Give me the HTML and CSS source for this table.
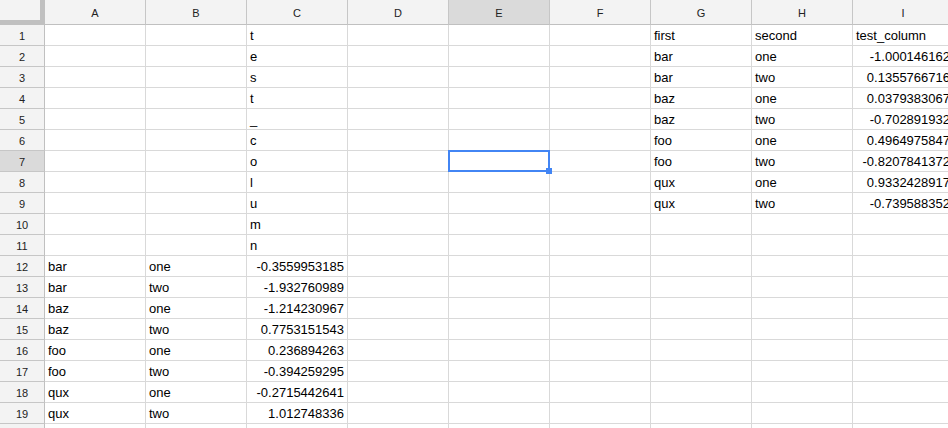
FILE: index.html
```html
<!DOCTYPE html>
<html>
<head>
<meta charset="utf-8">
<link rel="stylesheet" href="styles.css">
</head>
<body>
<div class="sheet">
  <div class="corner"></div>
  <div class="ch">A</div><div class="ch">B</div><div class="ch">C</div><div class="ch">D</div><div class="ch on">E</div><div class="ch">F</div><div class="ch">G</div><div class="ch">H</div><div class="ch">I</div>

  <div class="rh">1</div><div class="c"></div><div class="c"></div><div class="c">t</div><div class="c"></div><div class="c"></div><div class="c"></div><div class="c">first</div><div class="c">second</div><div class="c">test_column</div>
  <div class="rh">2</div><div class="c"></div><div class="c"></div><div class="c">e</div><div class="c"></div><div class="c"></div><div class="c"></div><div class="c">bar</div><div class="c">one</div><div class="c n">-1.000146162</div>
  <div class="rh">3</div><div class="c"></div><div class="c"></div><div class="c">s</div><div class="c"></div><div class="c"></div><div class="c"></div><div class="c">bar</div><div class="c">two</div><div class="c n">0.1355766716</div>
  <div class="rh">4</div><div class="c"></div><div class="c"></div><div class="c">t</div><div class="c"></div><div class="c"></div><div class="c"></div><div class="c">baz</div><div class="c">one</div><div class="c n">0.0379383067</div>
  <div class="rh">5</div><div class="c"></div><div class="c"></div><div class="c">_</div><div class="c"></div><div class="c"></div><div class="c"></div><div class="c">baz</div><div class="c">two</div><div class="c n">-0.702891932</div>
  <div class="rh">6</div><div class="c"></div><div class="c"></div><div class="c">c</div><div class="c"></div><div class="c"></div><div class="c"></div><div class="c">foo</div><div class="c">one</div><div class="c n">0.4964975847</div>
  <div class="rh on">7</div><div class="c"></div><div class="c"></div><div class="c">o</div><div class="c"></div><div class="c cur"><span class="sel"></span><span class="handle"></span></div><div class="c"></div><div class="c">foo</div><div class="c">two</div><div class="c n">-0.8207841372</div>
  <div class="rh">8</div><div class="c"></div><div class="c"></div><div class="c">l</div><div class="c"></div><div class="c"></div><div class="c"></div><div class="c">qux</div><div class="c">one</div><div class="c n">0.9332428917</div>
  <div class="rh">9</div><div class="c"></div><div class="c"></div><div class="c">u</div><div class="c"></div><div class="c"></div><div class="c"></div><div class="c">qux</div><div class="c">two</div><div class="c n">-0.739588352</div>
  <div class="rh">10</div><div class="c"></div><div class="c"></div><div class="c">m</div><div class="c"></div><div class="c"></div><div class="c"></div><div class="c"></div><div class="c"></div><div class="c"></div>
  <div class="rh">11</div><div class="c"></div><div class="c"></div><div class="c">n</div><div class="c"></div><div class="c"></div><div class="c"></div><div class="c"></div><div class="c"></div><div class="c"></div>
  <div class="rh">12</div><div class="c">bar</div><div class="c">one</div><div class="c n">-0.3559953185</div><div class="c"></div><div class="c"></div><div class="c"></div><div class="c"></div><div class="c"></div><div class="c"></div>
  <div class="rh">13</div><div class="c">bar</div><div class="c">two</div><div class="c n">-1.932760989</div><div class="c"></div><div class="c"></div><div class="c"></div><div class="c"></div><div class="c"></div><div class="c"></div>
  <div class="rh">14</div><div class="c">baz</div><div class="c">one</div><div class="c n">-1.214230967</div><div class="c"></div><div class="c"></div><div class="c"></div><div class="c"></div><div class="c"></div><div class="c"></div>
  <div class="rh">15</div><div class="c">baz</div><div class="c">two</div><div class="c n">0.7753151543</div><div class="c"></div><div class="c"></div><div class="c"></div><div class="c"></div><div class="c"></div><div class="c"></div>
  <div class="rh">16</div><div class="c">foo</div><div class="c">one</div><div class="c n">0.236894263</div><div class="c"></div><div class="c"></div><div class="c"></div><div class="c"></div><div class="c"></div><div class="c"></div>
  <div class="rh">17</div><div class="c">foo</div><div class="c">two</div><div class="c n">-0.394259295</div><div class="c"></div><div class="c"></div><div class="c"></div><div class="c"></div><div class="c"></div><div class="c"></div>
  <div class="rh">18</div><div class="c">qux</div><div class="c">one</div><div class="c n">-0.2715442641</div><div class="c"></div><div class="c"></div><div class="c"></div><div class="c"></div><div class="c"></div><div class="c"></div>
  <div class="rh">19</div><div class="c">qux</div><div class="c">two</div><div class="c n">1.012748336</div><div class="c"></div><div class="c"></div><div class="c"></div><div class="c"></div><div class="c"></div><div class="c"></div>
  <div class="rh">20</div><div class="c"></div><div class="c"></div><div class="c"></div><div class="c"></div><div class="c"></div><div class="c"></div><div class="c"></div><div class="c"></div><div class="c"></div>
</div>
</body>
</html>
```

FILE: styles.css
```css
html, body {
  margin: 0;
  padding: 0;
  background: #ffffff;
  overflow: hidden;
  width: 948px;
  height: 428px;
}

.sheet {
  display: grid;
  grid-template-columns: 45px repeat(9, 101px);
  grid-template-rows: 25px repeat(20, 21px);
  width: 954px;
  font-family: "Liberation Sans", Arial, sans-serif;
}

.corner {
  background: #f3f3f3;
  box-sizing: border-box;
  border-right: 5px solid #c0c0c0;
  border-bottom: 5px solid #c0c0c0;
}

.ch {
  background: #f3f3f3;
  box-sizing: border-box;
  border-right: 1px solid #c6c6c6;
  border-bottom: 1px solid #c0c0c0;
  font-size: 11px;
  color: #222222;
  display: flex;
  align-items: center;
  justify-content: center;
  padding-top: 2px;
}

.rh {
  background: #f3f3f3;
  box-sizing: border-box;
  border-right: 1px solid #c0c0c0;
  border-bottom: 1px solid #c6c6c6;
  font-size: 11px;
  color: #222222;
  display: flex;
  align-items: center;
  justify-content: center;
  padding-top: 1px;
}

.on {
  background: #dadada;
}

.c {
  box-sizing: border-box;
  border-right: 1px solid #d9d9d9;
  border-bottom: 1px solid #d9d9d9;
  font-size: 13px;
  color: #000000;
  padding: 2px 3px 0 3px;
  line-height: 18px;
  white-space: nowrap;
  overflow: hidden;
}

.n {
  text-align: right;
}

.cur {
  position: relative;
  overflow: visible;
}

.sel {
  position: absolute;
  left: -1px;
  top: -1px;
  width: 102px;
  height: 22px;
  box-sizing: border-box;
  border: 2px solid #4285f4;
}

.handle {
  position: absolute;
  left: 97px;
  top: 17px;
  width: 6px;
  height: 6px;
  background: #4285f4;
}
```
